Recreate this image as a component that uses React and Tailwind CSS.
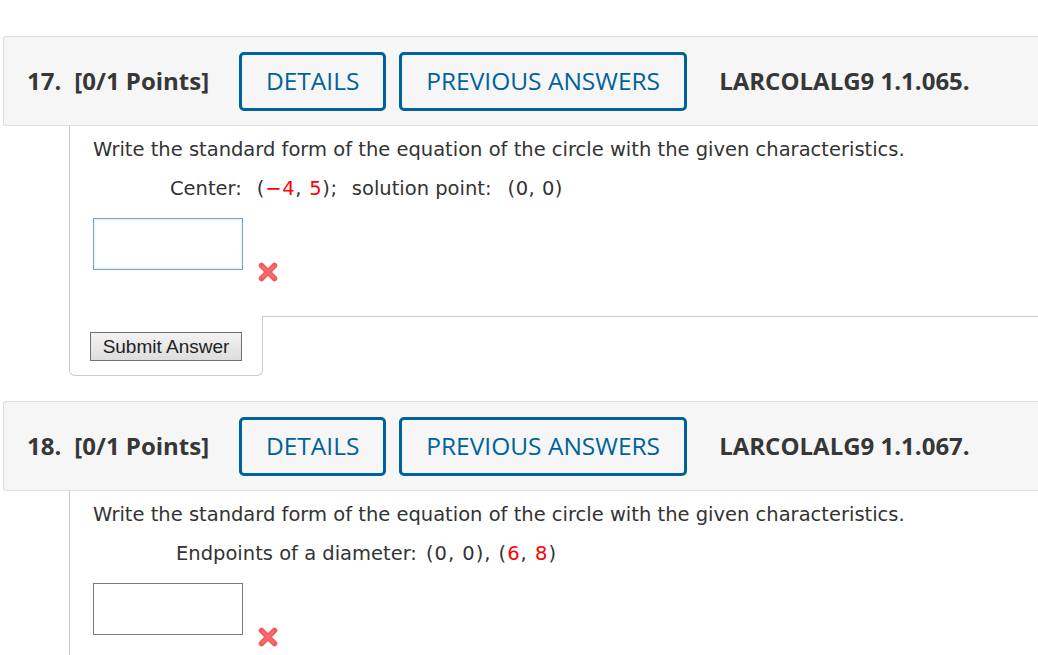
import React from "react";

function RedX() {
  return (
    <svg width="22" height="22" viewBox="0 0 22 22" className="shrink-0">
      <path d="M4.5 4.5 L17.5 17.5 M17.5 4.5 L4.5 17.5" stroke="#f35a5a" strokeWidth="5.5" strokeLinecap="round" />
      <path d="M5.5 5.5 L16.5 16.5 M16.5 5.5 L5.5 16.5" stroke="#ff8080" strokeWidth="1.8" strokeLinecap="round" opacity="0.55" />
    </svg>
  );
}

function Header({ num, code }) {
  return (
    <div className="flex items-center h-[90px] border border-r-0 border-[#dedede] rounded-l-[3px] bg-[#f6f6f6] pl-[23px] [font-family:'Open_Sans',sans-serif]">
      <span className="font-bold text-[24px] text-[#373737]">{num}</span>
      <span className="ml-[13px] font-bold text-[24px] text-[#373737]">[0/1 Points]</span>
      <button className="ml-[30px] h-[59px] w-[147px] border-[3px] border-[#00629b] rounded-[5px] text-[#00629b] text-[24.5px] bg-transparent">DETAILS</button>
      <button className="ml-[13px] h-[59px] w-[288px] border-[3px] border-[#00629b] rounded-[5px] text-[#00629b] text-[24.5px] bg-transparent">PREVIOUS ANSWERS</button>
      <span className="ml-[32px] font-bold text-[24px] text-[#373737]">{code}</span>
    </div>
  );
}

function Question({ children, blue, indent }) {
  return (
    <div className="pl-[23px] pt-[12px] [font-family:'DejaVu_Sans',Verdana,sans-serif] text-[19.5px] text-[#333333]">
      <div className="leading-[24px] whitespace-nowrap">Write the standard form of the equation of the circle with the given characteristics.</div>
      <div className={"leading-[24px] mt-[15px] whitespace-nowrap " + indent}>{children}</div>
      <div className="flex items-start mt-[17px]">
        <div className={blue ? "w-[150px] h-[52px] border border-[#7c9fcb] bg-white shadow-[inset_0_0_3px_#c4dbf5]" : "w-[150px] h-[52px] border border-[#7a7a7a] bg-white"}></div>
        <div className="ml-[14px] mt-[43px]"><RedX /></div>
      </div>
    </div>
  );
}

export default function App() {
  return (
    <div className="w-full h-[655px] bg-white overflow-hidden">
      <div className="pt-[36px] pl-[3px]">
        <Header num="17." code="LARCOLALG9 1.1.065." />
        <div className="ml-[66px]">
          <div className="pb-[33px] border-l border-[#cccccc]">
            <Question blue indent="pl-[77px]">
              <span>Center:</span>
              <span className="ml-[15px] tracking-[0.7px]">(<span className="text-[#f00]">−4</span>, <span className="text-[#f00]">5</span>);</span>
              <span className="ml-[14px]">solution point:</span>
              <span className="ml-[16px] tracking-[0.5px]">(0, 0)</span>
            </Question>
          </div>
          <div className="flex">
            <div className="w-[194px] border-l border-r border-b border-[#cccccc] rounded-b-[6px] pt-[16px] pb-[14px] pl-[20px]">
              <button className="h-[29px] w-[152px] border border-[#707070] bg-gradient-to-b from-[#f3f3f3] to-[#dddddd] text-[19px] text-[#222] [font-family:'Liberation_Sans',Arial,sans-serif] leading-none">Submit Answer</button>
            </div>
            <div className="flex-1 border-t border-[#cccccc]"></div>
          </div>
        </div>
        <div className="mt-[25px]">
          <Header num="18." code="LARCOLALG9 1.1.067." />
          <div className="ml-[66px] border-l border-[#cccccc] pb-[40px]">
            <Question indent="pl-[83px]">
              <span>Endpoints of a diameter:</span>
              <span className="ml-[9px] tracking-[1px]">(0, 0),</span>
              <span className="ml-[7px] tracking-[1px]">(<span className="text-[#f00]">6</span>, <span className="text-[#f00]">8</span>)</span>
            </Question>
          </div>
        </div>
      </div>
    </div>
  );
}
